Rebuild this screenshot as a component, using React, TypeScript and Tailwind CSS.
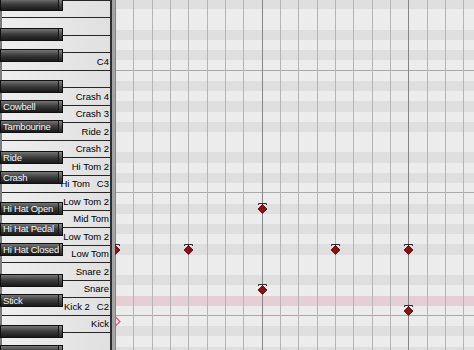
import React from "react";

const OCTAVES = [4, 3, 2, 1];
const WHITE: { name: string; semi: number }[] = [
  { name: "B", semi: 11 },
  { name: "A", semi: 9 },
  { name: "G", semi: 7 },
  { name: "F", semi: 5 },
  { name: "E", semi: 4 },
  { name: "D", semi: 2 },
  { name: "C", semi: 0 },
];
const SEMIS = [11, 10, 9, 8, 7, 6, 5, 4, 3, 2, 1, 0];
const BLACK = [1, 3, 6, 8, 10];

const LABELS: Record<number, string> = {
  57: "Crash 4",
  55: "Crash 3",
  53: "Ride 2",
  52: "Crash 2",
  50: "Hi Tom 2",
  48: "Hi Tom",
  47: "Low Tom 2",
  45: "Mid Tom",
  43: "Low Tom 2",
  41: "Low Tom",
  40: "Snare 2",
  38: "Snare",
  36: "Kick 2",
  35: "Kick",
  56: "Cowbell",
  54: "Tambourine",
  51: "Ride",
  49: "Crash",
  46: "Hi Hat Open",
  44: "Hi Hat Pedal",
  42: "Hi Hat Closed",
  37: "Stick",
};

const ROW = 10.22;
const COL = 18.333;
const C4_BOTTOM = 70.7;

const NOTES: { n: number; col: number }[] = [
  { n: 46, col: 8 },
  { n: 42, col: 0 },
  { n: 42, col: 4 },
  { n: 42, col: 12 },
  { n: 42, col: 16 },
  { n: 38, col: 8 },
  { n: 36, col: 16 },
];

function BlackKey({ label }: { label?: string }) {
  return (
    <div className="flex h-[13px] w-[63px] shrink-0 border border-[#101010] bg-linear-to-b from-[#767676] via-[#3a3a3a] to-[#1a1a1a]">
      <div className="flex flex-1 items-center whitespace-nowrap pl-[2px] text-[9.5px] leading-none tracking-[-0.2px] text-[#f4f4f4]">
        {label}
      </div>
      <div className="w-[4px] border-l border-[#141414] bg-linear-to-b from-[#8a8a8a] via-[#4c4c4c] to-[#262626]" />
    </div>
  );
}

function Piano() {
  return (
    <div className="relative h-full w-[110px] shrink-0 overflow-hidden bg-[#e4e4e4]">
      <div className="relative mt-[-51.94px]">
        <div className="flex flex-col border-l-2 border-[#7c7c7c]">
          {OCTAVES.map((o) =>
            WHITE.map((w) => {
              const midi = (o + 1) * 12 + w.semi;
              const label = LABELS[midi];
              return (
                <div
                  key={`${o}-${w.name}`}
                  className="flex h-[17.52px] items-center justify-end gap-[7px] border-b border-[#262626] bg-linear-to-r from-[#eeeeee] to-[#e0e0e0] pr-[1px] text-[9.5px] leading-none text-black"
                >
                  {label && <span className="whitespace-nowrap">{label}</span>}
                  {w.name === "C" && o >= 2 && <span>{`C${o}`}</span>}
                </div>
              );
            })
          )}
        </div>
        <div className="absolute inset-0 flex flex-col">
          {OCTAVES.map((o) =>
            SEMIS.map((s) => {
              const midi = (o + 1) * 12 + s;
              return (
                <div key={`${o}-${s}`} className="flex h-[10.22px] shrink-0 items-center">
                  {BLACK.includes(s) && <BlackKey label={LABELS[midi]} />}
                </div>
              );
            })
          )}
        </div>
      </div>
    </div>
  );
}

function NoteMark() {
  return (
    <svg width="11" height="14" viewBox="0 0 11 14">
      <path d="M1.5 3.5 H9.5 M1.5 3.5 V5 M9.5 3.5 V5 M5.5 3.5 V5" stroke="#2c2c2c" strokeWidth="1" fill="none" />
      <polygon points="5.5,4.6 10,9 5.5,13.4 1,9" fill="#8c1016" stroke="#4e0306" strokeWidth="0.8" />
    </svg>
  );
}

function Grid() {
  const cols = Array.from({ length: 20 }, (_, i) => i);
  return (
    <div className="relative h-full flex-1 overflow-hidden bg-[#ececec]">
      <div className="relative mt-[-51.94px]">
        <div className="flex flex-col">
          {OCTAVES.map((o) =>
            SEMIS.map((s) => {
              const midi = (o + 1) * 12 + s;
              const black = BLACK.includes(s);
              let cls = black ? "bg-[#dfdfdf]" : "bg-[#ececec]";
              if (midi === 37) cls = "bg-[#e5cfd2]";
              return (
                <div
                  key={`${o}-${s}`}
                  className={`h-[10.22px] shrink-0 ${cls} ${s === 0 ? "border-b border-[#a9a9a9]" : ""}`}
                />
              );
            })
          )}
        </div>
      </div>
      <div className="absolute inset-0 flex">
        {cols.map((i) => (
          <div
            key={i}
            className={`h-full w-[18.333px] shrink-0 border-l ${i % 8 === 0 ? "border-[#858585]" : "border-[#b5b5b5]"}`}
          />
        ))}
      </div>
      {NOTES.map((note, i) => {
        const cy = C4_BOTTOM - (note.n - 60) * ROW - ROW / 2;
        return (
          <div
            key={i}
            className="absolute"
            style={{ left: note.col * COL + 0.5 - 5.5, top: cy - 9 }}
          >
            <NoteMark />
          </div>
        );
      })}
      <svg className="absolute left-0 top-[316px]" width="8" height="12" viewBox="0 0 8 12">
        <polyline points="0.5,1 5,5.5 0.5,10" fill="none" stroke="#e0546c" strokeWidth="1.2" />
      </svg>
    </div>
  );
}

export default function App() {
  return (
    <div className="flex h-[350px] w-[474px] overflow-hidden bg-white font-['Liberation_Sans',Arial,sans-serif]">
      <Piano />
      <div className="h-full w-[2px] shrink-0 bg-[#2e2e2e]" />
      <div className="h-full w-[3px] shrink-0 bg-[#a4a4a4]" />
      <Grid />
    </div>
  );
}
